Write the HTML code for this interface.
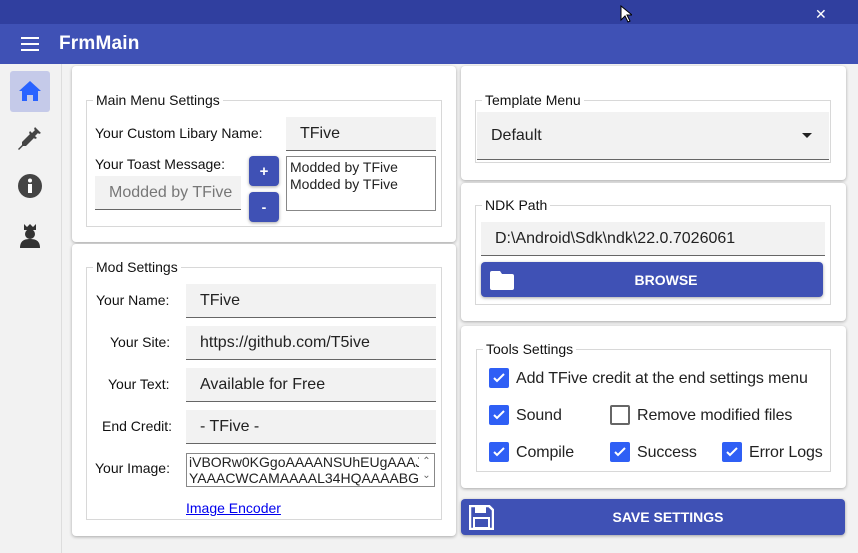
<!DOCTYPE html>
<html><head><style>
*{box-sizing:border-box;margin:0;padding:0}
body{width:858px;height:553px;overflow:hidden;background:#f2f2f2;font-family:"Liberation Sans",sans-serif;position:relative;color:#222}
.a{position:absolute}
.card{position:absolute;background:#fff;border-radius:4px;box-shadow:0 1px 3px rgba(0,0,0,.3)}
.gb{position:absolute;border:1px solid #d8d8d8}
.lg{position:absolute;background:#fff;padding:0 3px;font-size:14px;top:-9px;left:6px;color:#111}
.lbl{position:absolute;font-size:14px;color:#111}
.fld{position:absolute;background:#f2f2f2;border-bottom:1px solid #666;font-size:16px;color:#222;padding-left:14px;display:flex;align-items:center}
.btn{position:absolute;background:#3f51b5;border-radius:4px;color:#fff;font-weight:bold;font-size:14px;display:flex;align-items:center;justify-content:center;box-shadow:0 1px 3px rgba(0,0,0,.35)}
.cb{position:absolute;width:20px;height:20px;background:#2f5ff5;border-radius:2px}
.cb svg{position:absolute;left:3px;top:4px}
.ct{position:absolute;font-size:16px;color:#222;letter-spacing:-.1px}
</style></head><body>
<div class="a" style="left:0;top:0;width:858px;height:24px;background:#303f9f"></div>
<div class="a" style="left:815px;top:6px;color:#fff;font-size:14px">✕</div>
<div class="a" style="left:0;top:24px;width:858px;height:40px;background:#3f51b5"></div>
<div class="a" style="left:21px;top:37px;width:18px;height:2px;background:#fff;box-shadow:0 6px 0 #fff,0 12px 0 #fff"></div>
<div class="a" style="left:59px;top:33px;color:#fff;font-size:19px;font-weight:bold;letter-spacing:.2px">FrmMain</div>
<div class="a" style="left:61px;top:64px;width:1px;height:489px;background:#ddd"></div>
<div class="a" style="left:10px;top:71px;width:40px;height:41px;background:#c5cae9;border-radius:3px"></div>
<svg class="a" style="left:19px;top:81px" width="22" height="20" viewBox="0 0 22 20"><path d="M11 0L0 10h3v10h5v-6h6v6h5V10h3z" fill="#2962ff"/></svg>
<svg class="a" style="left:18px;top:126px" width="24" height="24" viewBox="0 0 24 24"><path d="M17 1l6 6-2 1-1-1-3 3 2 2-2 1-1-1-8 8H5l-4 4-1-1 4-4v-3l8-8-1-1 1-2 2 2 3-3-1-1z" fill="#444"/></svg>
<svg class="a" style="left:18px;top:174px" width="24" height="24" viewBox="0 0 24 24"><circle cx="12" cy="12" r="12" fill="#444"/><rect x="10" y="10" width="4" height="9" fill="#fff"/><circle cx="12" cy="6.5" r="2" fill="#fff"/></svg>
<svg class="a" style="left:19px;top:224px" width="22" height="24" viewBox="0 0 22 24"><path d="M5 0l3 3 3-3 3 3 3-3v6H5z" fill="#333"/><circle cx="11" cy="10" r="5" fill="#333"/><path d="M1 24c0-7 4-9 10-9s10 2 10 9z" fill="#333"/></svg>

<div class="card" style="left:72px;top:66px;width:384px;height:176px">
 <div class="gb" style="left:14px;top:34px;width:356px;height:127px"><span class="lg">Main Menu Settings</span></div>
 <div class="lbl" style="left:23px;top:59px">Your Custom Libary Name:</div>
 <div class="fld" style="left:214px;top:51px;width:150px;height:34px">TFive</div>
 <div class="lbl" style="left:23px;top:90px">Your Toast Message:</div>
 <div class="fld" style="left:23px;top:110px;width:146px;height:34px;color:#777">Modded by TFive</div>
 <div class="btn" style="left:177px;top:90px;width:30px;height:30px;font-size:15px">+</div>
 <div class="btn" style="left:177px;top:126px;width:30px;height:30px">-</div>
 <div class="a" style="left:214px;top:90px;width:150px;height:55px;border:1px solid #888;font-size:14px;padding:2px 3px;line-height:17px">Modded by TFive<br>Modded by TFive</div>
</div>

<div class="card" style="left:72px;top:244px;width:384px;height:292px">
 <div class="gb" style="left:14px;top:23px;width:356px;height:253px"><span class="lg">Mod Settings</span></div>
 <div class="lbl" style="left:24px;top:48px">Your Name:</div>
 <div class="fld" style="left:114px;top:40px;width:250px;height:34px">TFive</div>
 <div class="lbl" style="left:38px;top:90px">Your Site:</div>
 <div class="fld" style="left:114px;top:82px;width:250px;height:34px">https://github.com/T5ive</div>
 <div class="lbl" style="left:36px;top:132px">Your Text:</div>
 <div class="fld" style="left:114px;top:124px;width:250px;height:34px">Available for Free</div>
 <div class="lbl" style="left:30px;top:174px">End Credit:</div>
 <div class="fld" style="left:114px;top:166px;width:250px;height:34px">- TFive -</div>
 <div class="lbl" style="left:23px;top:216px">Your Image:</div>
 <div class="a" style="left:114px;top:209px;width:249px;height:34px;border:1px solid #888;font-size:14px;line-height:16px;padding:0 2px;overflow:hidden;white-space:nowrap">iVBORw0KGgoAAAANSUhEUgAAAJ<br>YAAACWCAMAAAAL34HQAAAABG</div>
 <div class="a" style="left:347px;top:211px;width:15px;height:30px;background:#fff;font-size:10px;color:#666;line-height:14px;text-align:center">⌃<br>⌄</div>
 <div class="a" style="left:114px;top:256px;font-size:14px;color:#00e;text-decoration:underline">Image Encoder</div>
</div>

<div class="card" style="left:461px;top:66px;width:385px;height:114px">
 <div class="gb" style="left:14px;top:34px;width:356px;height:63px"><span class="lg">Template Menu</span></div>
 <div class="fld" style="left:16px;top:46px;width:352px;height:48px">Default</div>
 <div class="a" style="left:341px;top:67px;width:0;height:0;border:5px solid transparent;border-top:5px solid #222"></div>
</div>

<div class="card" style="left:461px;top:183px;width:385px;height:138px">
 <div class="gb" style="left:14px;top:22px;width:356px;height:100px"><span class="lg">NDK Path</span></div>
 <div class="fld" style="left:20px;top:39px;width:344px;height:34px">D:\Android\Sdk\ndk\22.0.7026061</div>
 <div class="btn" style="left:20px;top:79px;width:342px;height:35px;padding-left:28px">BROWSE</div>
 <svg class="a" style="left:29px;top:88px" width="24" height="19" viewBox="0 0 24 19"><path d="M2 0h8l2 3h10a2 2 0 012 2v12a2 2 0 01-2 2H2a2 2 0 01-2-2V2a2 2 0 012-2z" fill="#fff"/></svg>
</div>

<div class="card" style="left:461px;top:326px;width:385px;height:162px">
 <div class="gb" style="left:15px;top:23px;width:355px;height:123px"><span class="lg">Tools Settings</span></div>
 <div class="cb" style="left:28px;top:42px"><svg width="14" height="12" viewBox="0 0 14 12"><path d="M2 6l3 3 7-7" stroke="#fff" stroke-width="2" fill="none"/></svg></div>
 <div class="ct" style="left:55px;top:44px">Add TFive credit at the end settings menu</div>
 <div class="cb" style="left:28px;top:79px"><svg width="14" height="12" viewBox="0 0 14 12"><path d="M2 6l3 3 7-7" stroke="#fff" stroke-width="2" fill="none"/></svg></div>
 <div class="ct" style="left:55px;top:81px">Sound</div>
 <div class="a" style="left:149px;top:79px;width:20px;height:20px;border:2px solid #666;border-radius:2px"></div>
 <div class="ct" style="left:176px;top:81px">Remove modified files</div>
 <div class="cb" style="left:28px;top:116px"><svg width="14" height="12" viewBox="0 0 14 12"><path d="M2 6l3 3 7-7" stroke="#fff" stroke-width="2" fill="none"/></svg></div>
 <div class="ct" style="left:55px;top:118px">Compile</div>
 <div class="cb" style="left:149px;top:116px"><svg width="14" height="12" viewBox="0 0 14 12"><path d="M2 6l3 3 7-7" stroke="#fff" stroke-width="2" fill="none"/></svg></div>
 <div class="ct" style="left:176px;top:118px">Success</div>
 <div class="cb" style="left:261px;top:116px"><svg width="14" height="12" viewBox="0 0 14 12"><path d="M2 6l3 3 7-7" stroke="#fff" stroke-width="2" fill="none"/></svg></div>
 <div class="ct" style="left:288px;top:118px">Error Logs</div>
</div>

<div class="btn" style="left:461px;top:499px;width:384px;height:36px;padding-left:30px">SAVE SETTINGS</div>
<svg class="a" style="left:469px;top:505px" width="25" height="25" viewBox="0 0 25 25"><path d="M1 1h19l4 4v19H1z" fill="none" stroke="#fff" stroke-width="2.5"/><rect x="6" y="2" width="11" height="6" fill="#fff"/><rect x="5" y="13" width="15" height="10" fill="none" stroke="#fff" stroke-width="2"/></svg>
<svg class="a" style="left:620px;top:5px" width="12" height="18" viewBox="0 0 12 18"><path d="M1 1v14l4-4 3 6 2-1-3-6h5z" fill="#fff" stroke="#000"/></svg>
</body></html>
